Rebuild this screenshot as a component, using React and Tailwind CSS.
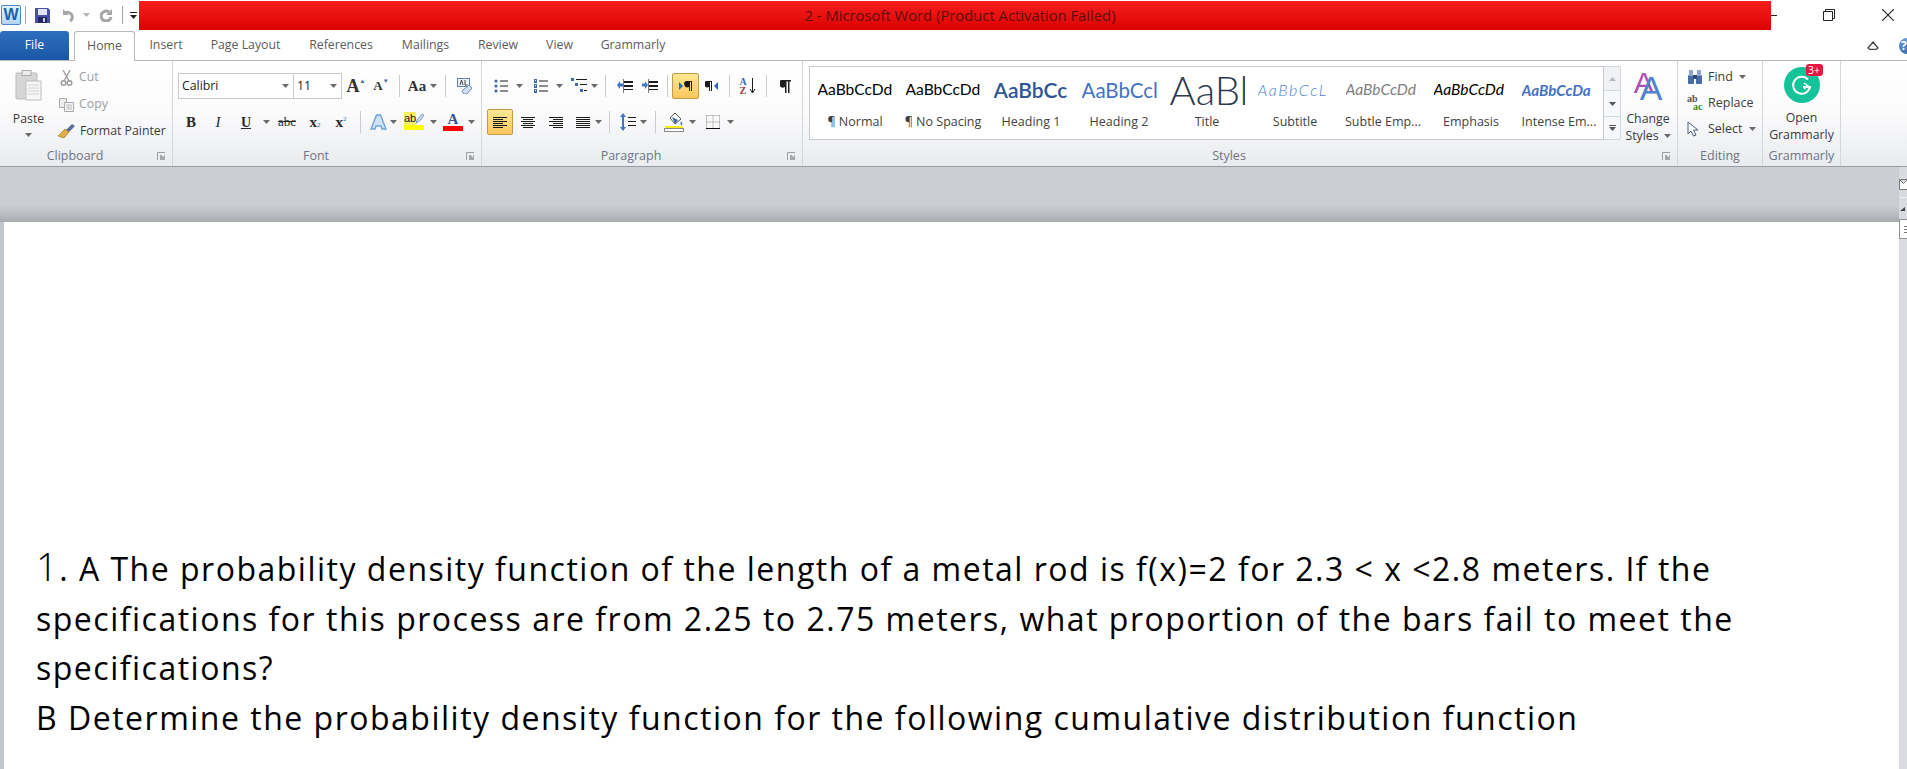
import React from "react";

const UI = "font-['Open_Sans','Noto_Sans',sans-serif]";

function Caret({ c = "#6a6a6a" }) {
  return (
    <svg width="7" height="4" viewBox="0 0 7 4" className="shrink-0">
      <path d="M0 0h7L3.5 4z" fill={c} />
    </svg>
  );
}

function Sep() {
  return <div className="w-px h-[22px] bg-[#c9ccd1]" />;
}

function Cell({ w, children }) {
  return <div className={`${w} h-[26px] shrink-0 flex items-center justify-center`}>{children}</div>;
}

function Launcher() {
  return (
    <svg width="9" height="9" viewBox="0 0 9 9">
      <path d="M0.5 8V0.5H8" fill="none" stroke="#9a9da3" />
      <path d="M3 3h2v1h1v1h1V3h1v5H3z" fill="#a4a7ac" />
    </svg>
  );
}

function Group({ w, label, launcher, children }) {
  return (
    <div className={`${w} shrink-0 h-[105px] flex flex-col border-r border-[#d3d6db]`}>
      <div className="h-[85px] relative">{children}</div>
      <div className="h-[20px] flex items-center">
        <div className={`flex-1 text-center text-[12.5px] text-[#6c7589] ${UI}`}>{label}</div>
        {launcher && (
          <div className="w-[22px] flex justify-center">
            <Launcher />
          </div>
        )}
      </div>
    </div>
  );
}

function Lines({ rows, w = 14 }) {
  return (
    <svg width={w} height="14" viewBox={`0 0 ${w} 14`}>
      {rows.map((r, i) => (
        <rect key={i} x={r[0]} y={r[1]} width={r[2]} height="1" fill="#1c1c1c" />
      ))}
    </svg>
  );
}

const alignLeft = [[0, 2, 14], [0, 4, 10], [0, 6, 14], [0, 8, 10], [0, 10, 14], [0, 12, 10]];
const alignCenter = [[0, 2, 14], [2, 4, 10], [0, 6, 14], [2, 8, 10], [0, 10, 14], [2, 12, 10]];
const alignRight = [[0, 2, 14], [4, 4, 10], [0, 6, 14], [4, 8, 10], [0, 10, 14], [4, 12, 10]];
const justify = [[0, 2, 14], [0, 4, 14], [0, 6, 14], [0, 8, 14], [0, 10, 14], [0, 12, 14]];

function Bullets() {
  return (
    <svg width="14" height="14" viewBox="0 0 14 14">
      {[2, 7, 12].map((y) => (
        <g key={y}>
          <circle cx="2" cy={y} r="1.6" fill="#3f68ad" />
          <rect x="6" y={y - 0.5} width="8" height="1" fill="#1c1c1c" />
        </g>
      ))}
    </svg>
  );
}

function Numbering() {
  return (
    <svg width="15" height="14" viewBox="0 0 15 14">
      {[2, 7, 12].map((y) => (
        <g key={y}>
          <rect x="1" y={y - 2} width="3" height="4" fill="#3f68ad" />
          <rect x="2" y={y - 1} width="1" height="1" fill="#fff" />
          <rect x="6" y={y - 0.5} width="9" height="1" fill="#1c1c1c" />
        </g>
      ))}
    </svg>
  );
}

function Multilevel() {
  return (
    <svg width="16" height="16" viewBox="0 0 16 16">
      <rect x="0" y="0" width="3" height="3" fill="#3f68ad" />
      <rect x="5" y="1" width="11" height="1" fill="#1c1c1c" />
      <rect x="4" y="5" width="3" height="3" fill="#3f68ad" />
      <rect x="9" y="6" width="7" height="1" fill="#1c1c1c" />
      <rect x="9" y="11" width="3" height="3" fill="#3f68ad" />
      <rect x="13" y="12" width="3" height="1" fill="#1c1c1c" />
    </svg>
  );
}

function Indent({ flip }) {
  return (
    <svg width="16" height="14" viewBox="0 0 16 14">
      <rect x="7" y="2" width="9" height="2" fill="#1c1c1c" />
      <rect x="7" y="6" width="9" height="2" fill="#1c1c1c" />
      <rect x="7" y="10" width="9" height="1" fill="#1c1c1c" />
      <rect x="6" y="0" width="1" height="14" fill="#777" />
      {flip ? (
        <path d="M0 4.5h3V2l3 4-3 4V7.5H0z" fill="#3c76c9" />
      ) : (
        <path d="M6 4.5H3V2L0 6l3 4V7.5h3z" fill="#3c76c9" />
      )}
    </svg>
  );
}

function Para({ dir }) {
  return (
    <svg width="14" height="12" viewBox="0 0 14 12">
      {dir === "ltr" ? (
        <>
          <path d="M0 2l4 4-4 4z" fill="#2c66bd" />
          <path d="M7 1h6v10h-1V2h-1v9h-1V7a3 3 0 0 1 -3-6z" fill="#1c1c1c" />
        </>
      ) : (
        <>
          <path d="M1 1h6v10H6V2H5v9H4V7a3 3 0 0 1 -3-6z" fill="#1c1c1c" />
          <path d="M13 2L9 6l4 4z" fill="#2c66bd" />
        </>
      )}
    </svg>
  );
}

function Pilcrow() {
  return (
    <svg width="11" height="14" viewBox="0 0 11 14">
      <path d="M1 1h10v1.5H9.5V14H8V2.5H6.5V14H5V8A3.5 3.5 0 0 1 1 1z" fill="#1f1f1f" />
    </svg>
  );
}

function Sort() {
  return (
    <div className="flex items-center gap-[2px]">
      <div className="flex flex-col text-[10px] leading-[9px] font-bold font-['Liberation_Serif',serif]">
        <span className="text-[#3f68ad]">A</span>
        <span className="text-[#a33a3a]">Z</span>
      </div>
      <svg width="7" height="16" viewBox="0 0 7 16">
        <path d="M3.5 0v14M1 11l2.5 4L6 11" fill="none" stroke="#1c1c1c" />
      </svg>
    </div>
  );
}

function LineSpacing() {
  return (
    <svg width="16" height="18" viewBox="0 0 16 18">
      <path d="M3 0l3 4H4v10h2l-3 4-3-4h2V4H0z" fill="#3c76c9" />
      <rect x="8" y="4" width="8" height="1" fill="#1c1c1c" />
      <rect x="8" y="8" width="8" height="1" fill="#1c1c1c" />
      <rect x="8" y="12" width="8" height="1" fill="#1c1c1c" />
    </svg>
  );
}

function Shading() {
  return (
    <svg width="20" height="20" viewBox="0 0 20 20">
      <path d="M6 6l5-5 6 6-6 5z" fill="#fff" stroke="#555" />
      <path d="M8 5l6 3-3 4z" fill="#3f68ad" />
      <path d="M17 9c1 2 2 3 1 4s-2-1-1-4z" fill="#3f68ad" />
      <rect x="1" y="14" width="18" height="2" fill="#f5ef1e" />
      <rect x="0.5" y="16.5" width="19" height="3" fill="#fff" stroke="#8a8a8a" />
    </svg>
  );
}

function Borders() {
  return (
    <svg width="14" height="14" viewBox="0 0 14 14">
      <path d="M0.5 0.5h13M0.5 0.5v13M13.5 0.5v13M0.5 7h13M7 0.5v13" stroke="#8a8a8a" strokeDasharray="1 1" fill="none" />
      <rect x="0" y="13" width="14" height="1" fill="#111" />
    </svg>
  );
}

function Style({ label, className, text }) {
  return (
    <div className="w-[88px] h-[72px] shrink-0 flex flex-col items-center font-['Lato',sans-serif]">
      <div className="h-[46px] w-[75px] overflow-hidden flex items-center whitespace-nowrap">
        <span className={className}>{text}</span>
      </div>
      <div className={`h-[16px] mt-[1px] text-[12.5px] leading-[16px] text-[#3f3f3f] whitespace-nowrap ${UI}`}>{label}</div>
    </div>
  );
}

function EditRow({ icon, label, caret }) {
  return (
    <div className="flex items-center h-[26px]">
      <div className="w-[21px] ml-[9px] flex justify-start">{icon}</div>
      <span className={`text-[12.5px] text-[#3c3c3c] ${UI}`}>{label}</span>
      {caret && (
        <span className="ml-[6px]">
          <Caret />
        </span>
      )}
    </div>
  );
}

export default function App() {
  return (
    <div className={`w-[1907px] h-[769px] overflow-hidden bg-white flex flex-col ${UI}`}>
      {/* Title bar */}
      <div className="h-[30px] flex bg-white shrink-0">
        <div className="w-[139px] shrink-0 flex items-center">
          <div className="ml-[1px] w-[20px] h-[20px] border border-[#4a86c8] rounded-[2px] bg-gradient-to-b from-[#e6f1fb] to-[#b8d4ee] flex items-center justify-center text-[16px] font-bold leading-none text-[#1b62ad] font-['Liberation_Sans',sans-serif]">
            W
          </div>
          <div className="ml-[4px] w-px h-[18px] bg-[#a8a8a8]" />
          <div className="ml-[9px]">
            <svg width="15" height="15" viewBox="0 0 15 15">
              <path d="M0 0h13l2 2v13H0z" fill="#4a4fa8" />
              <rect x="3" y="1" width="9" height="6" fill="#dfe3f5" />
              <rect x="3" y="9" width="9" height="6" fill="#23265e" />
              <rect x="8" y="10" width="2" height="4" fill="#c9ccdb" />
            </svg>
          </div>
          <div className="ml-[12px]">
            <svg width="13" height="14" viewBox="0 0 13 14">
              <path d="M1 1l0 6h6z" fill="#a6a6a6" />
              <path d="M3 5a4.5 4.5 0 1 1 5 8" fill="none" stroke="#a6a6a6" strokeWidth="3" />
            </svg>
          </div>
          <div className="ml-[8px]">
            <Caret c="#b4b4b4" />
          </div>
          <div className="ml-[10px]">
            <svg width="13" height="14" viewBox="0 0 13 14">
              <path d="M12 1v6H6z" fill="#a6a6a6" />
              <path d="M9 4a5 5 0 1 0 2 5" fill="none" stroke="#a6a6a6" strokeWidth="3" />
            </svg>
          </div>
          <div className="ml-[9px] w-px h-[18px] bg-[#a8a8a8]" />
          <div className="ml-[7px]">
            <svg width="7" height="7" viewBox="0 0 7 7">
              <rect width="7" height="1" fill="#222" />
              <path d="M0 3h7L3.5 7z" fill="#222" />
            </svg>
          </div>
        </div>
        <div className="w-[1632px] h-[29px] mt-[1px] shrink-0 bg-gradient-to-b from-[#f61c1c] to-[#dc0000] flex items-center justify-center text-[14.8px] text-[#5e0c0c] pb-[1px] pl-[10px]">
          2 - Microsoft Word (Product Activation Failed)
        </div>
        <div className="flex-1 flex items-center">
          <div className="w-[6px] h-px bg-[#222]" />
          <div className="ml-[46px]">
            <svg width="12" height="12" viewBox="0 0 12 12">
              <path d="M0.5 2.5h9v9h-9zM2.5 2.5v-2h9v9h-2" fill="none" stroke="#222" />
            </svg>
          </div>
          <div className="ml-[47px]">
            <svg width="12" height="12" viewBox="0 0 12 12">
              <path d="M0 0l12 12M12 0L0 12" stroke="#222" strokeWidth="1.1" />
            </svg>
          </div>
        </div>
      </div>

      {/* Tabs */}
      <div className="h-[31px] shrink-0 flex items-end border-b border-[#b6b9be] bg-white text-[12.3px] text-[#5c5c5c]">
        <div className="w-[69px] h-[29px] rounded-t-[3px] bg-gradient-to-b from-[#2f6fc0] to-[#1a57a6] text-white flex items-center justify-center">File</div>
        <div className="ml-[5px] w-[61px] h-[30px] -mb-px rounded-t-[3px] border border-b-0 border-[#b6b9be] bg-white flex items-center justify-center">Home</div>
        <div className="w-[62px] h-[29px] flex items-center justify-center">Insert</div>
        <div className="w-[97px] h-[29px] flex items-center justify-center">Page Layout</div>
        <div className="w-[94px] h-[29px] flex items-center justify-center">References</div>
        <div className="w-[75px] h-[29px] flex items-center justify-center">Mailings</div>
        <div className="w-[70px] h-[29px] flex items-center justify-center">Review</div>
        <div className="w-[53px] h-[29px] flex items-center justify-center">View</div>
        <div className="w-[94px] h-[29px] flex items-center justify-center">Grammarly</div>
        <div className="flex-1 h-[29px] flex items-center justify-end">
          <svg width="12" height="9" viewBox="0 0 12 9" className="mr-[20px]">
            <path d="M1 7l5-6 5 6-2 1.5H3z" fill="none" stroke="#444" strokeWidth="1.3" />
          </svg>
          <div className="w-[8px] h-[16px] overflow-hidden rounded-l-full bg-gradient-to-b from-[#6b9ad8] to-[#3b6fb8] text-white text-[12px] font-bold leading-[16px] pl-[2px]">?</div>
        </div>
      </div>

      {/* Ribbon */}
      <div className="h-[106px] shrink-0 flex border-b border-[#989ca3] bg-gradient-to-b from-white via-[#fbfbfc] to-[#e9ebee]">
        <Group w="w-[173px]" label="Clipboard" launcher>
          <div className="flex h-full">
            <div className="w-[57px] flex flex-col items-center pt-[9px]">
              <svg width="27" height="31" viewBox="0 0 27 31">
                <rect x="1" y="3" width="21" height="26" rx="1" fill="#d6d6d6" stroke="#bbb" />
                <rect x="7" y="0.5" width="9" height="5" fill="#eee" stroke="#aaa" />
                <path d="M11 11h15v19H11z" fill="#f7f7f7" stroke="#bdbdbd" />
                <path d="M13 15h11M13 18h11M13 21h11M13 24h11" stroke="#d2d2d2" />
              </svg>
              <span className="text-[12.3px] leading-[16px] mt-[10px] text-[#3c3c3c]">Paste</span>
              <span className="mt-[6px]">
                <Caret />
              </span>
            </div>
            <div className="flex flex-col pt-[3px]">
              <div className="h-[27px] flex items-center text-[12.3px] text-[#a0a0a0]">
                <svg width="15" height="16" viewBox="0 0 15 16" className="ml-[3px] mr-[4px]">
                  <path d="M3 0l6 11M10 0L4 11" stroke="#a0a0a0" strokeWidth="1.4" />
                  <circle cx="3.5" cy="13" r="2.3" fill="none" stroke="#9a9a9a" strokeWidth="1.4" />
                  <circle cx="9.5" cy="13" r="2.3" fill="none" stroke="#9a9a9a" strokeWidth="1.4" />
                </svg>
                Cut
              </div>
              <div className="h-[27px] flex items-center text-[12.3px] text-[#a0a0a0]">
                <svg width="15" height="14" viewBox="0 0 15 14" className="ml-[2px] mr-[5px]">
                  <path d="M0.5 0.5h7v9h-7z" fill="#eee" stroke="#aaa" />
                  <path d="M5.5 4.5h9v9h-9z" fill="#f6f6f6" stroke="#aaa" />
                  <path d="M7 7h6M7 9h6M7 11h6" stroke="#bbb" />
                </svg>
                Copy
              </div>
              <div className="h-[27px] flex items-center text-[12.3px] text-[#3c3c3c]">
                <svg width="17" height="15" viewBox="0 0 17 15" className="ml-[1px] mr-[5px]">
                  <path d="M0 12l7-7 4 3-5 6z" fill="#e0b341" stroke="#9c7a26" strokeWidth="0.7" />
                  <path d="M8 6l6-6 3 2-6 6z" fill="#5a6f9a" />
                </svg>
                Format Painter
              </div>
            </div>
          </div>
        </Group>

        <Group w="w-[309px]" label="Font" launcher>
          <div className="pt-[12px] pl-[5px] flex">
            <div className="w-[116px] h-[26px] border border-[#c6c9ce] bg-white flex items-center justify-between pl-[3px] pr-[4px] text-[12.3px] text-[#222] shrink-0">
              Calibri
              <Caret />
            </div>
            <div className="w-[48px] h-[26px] border border-l-0 border-[#c6c9ce] bg-white flex items-center justify-between pl-[3px] pr-[4px] text-[12.3px] text-[#222] shrink-0">
              11
              <Caret />
            </div>
            <Cell w="w-[28px]">
              <span className="text-[18px] font-bold text-[#333] font-['Liberation_Serif',serif]">A</span>
              <span className="text-[6px] text-[#3f68ad] -mt-[10px]">▲</span>
            </Cell>
            <Cell w="w-[22px]">
              <span className="text-[13px] font-bold text-[#333] font-['Liberation_Serif',serif]">A</span>
              <span className="text-[6px] text-[#3f68ad] -mt-[10px]">▼</span>
            </Cell>
            <Cell w="w-[14px]">
              <Sep />
            </Cell>
            <Cell w="w-[22px]">
              <span className="text-[15px] font-bold text-[#333] font-['Liberation_Serif',serif]">Aa</span>
            </Cell>
            <Cell w="w-[10px]">
              <Caret />
            </Cell>
            <Cell w="w-[14px]">
              <Sep />
            </Cell>
            <Cell w="w-[25px]">
              <svg width="16" height="16" viewBox="0 0 16 16">
                <rect x="0.5" y="0.5" width="12" height="8" fill="#eef2f8" stroke="#5f7fae" />
                <path d="M3 7l1.5-5L6 7M8 2v5h2.5" fill="none" stroke="#333" strokeWidth="0.9" />
                <path d="M5 13l7-6 3 3-5 6H7z" fill="#cfe0f5" stroke="#6c8bb8" />
              </svg>
            </Cell>
          </div>
          <div className="mt-[10px] pl-[6px] flex text-[#2a2a2a] font-['Liberation_Serif',serif]">
            <Cell w="w-[24px]">
              <span className="text-[15px] font-bold">B</span>
            </Cell>
            <Cell w="w-[30px]">
              <span className="text-[15px] italic">I</span>
            </Cell>
            <Cell w="w-[26px]">
              <span className="text-[14px] font-bold underline">U</span>
            </Cell>
            <Cell w="w-[14px]">
              <Caret />
            </Cell>
            <Cell w="w-[28px]">
              <span className="text-[13px] line-through">abc</span>
            </Cell>
            <Cell w="w-[28px]">
              <span className="text-[15px] font-bold">x</span>
              <span className="text-[7px] text-[#3f68ad] mt-[6px]">2</span>
            </Cell>
            <Cell w="w-[24px]">
              <span className="text-[15px] font-bold">x</span>
              <span className="text-[7px] text-[#3f68ad] -mt-[6px]">2</span>
            </Cell>
            <Cell w="w-[15px]">
              <Sep />
            </Cell>
            <Cell w="w-[20px]">
              <svg width="17" height="16" viewBox="0 0 17 16">
                <path d="M6.5 1h4L16 15h-4l-1-3H6l-1 3H1z" fill="#cfe2f8" stroke="#6ea3de" strokeWidth="1.4" />
              </svg>
            </Cell>
            <Cell w="w-[10px]">
              <Caret />
            </Cell>
            <Cell w="w-[32px]">
              <div className="flex flex-col items-center w-[20px] -mt-[2px]">
                <div className="flex items-center">
                  <span className="text-[11px] leading-[13px] bg-[#f3ef6a] font-['Liberation_Sans',sans-serif] text-[#222]">ab</span>
                  <svg width="8" height="11" viewBox="0 0 8 11">
                    <path d="M0 10l1-3 5-6 2 1.5-5 6z" fill="#cfe0f5" stroke="#5f7fae" strokeWidth="0.8" />
                  </svg>
                </div>
                <div className="w-[20px] h-[5px] bg-[#ffff00]" />
              </div>
            </Cell>
            <Cell w="w-[6px]">
              <Caret />
            </Cell>
            <Cell w="w-[34px]">
              <div className="flex flex-col items-center w-[20px] -mt-[2px]">
                <span className="text-[15px] leading-[14px] font-bold text-[#2f5597]">A</span>
                <div className="w-[20px] h-[5px] bg-[#ff0000]" />
              </div>
            </Cell>
            <Cell w="w-[2px]">
              <Caret />
            </Cell>
          </div>
        </Group>

        <Group w="w-[321px]" label="Paragraph" launcher>
          <div className="pt-[12px] pl-[9px] flex">
            <Cell w="w-[19px]">
              <Bullets />
            </Cell>
            <Cell w="w-[19px]">
              <Caret />
            </Cell>
            <Cell w="w-[22px]">
              <Numbering />
            </Cell>
            <Cell w="w-[16px]">
              <Caret />
            </Cell>
            <Cell w="w-[24px]">
              <Multilevel />
            </Cell>
            <Cell w="w-[6px]">
              <Caret />
            </Cell>
            <Cell w="w-[16px]">
              <Sep />
            </Cell>
            <Cell w="w-[23px]">
              <Indent />
            </Cell>
            <Cell w="w-[28px]">
              <Indent flip />
            </Cell>
            <Cell w="w-[6px]">
              <Sep />
            </Cell>
            <div className="ml-[2px] w-[27px] h-[26px] shrink-0 rounded-[2px] border border-[#c29a4a] bg-gradient-to-b from-[#fde893] to-[#fcc75c] flex items-center justify-center">
              <Para dir="ltr" />
            </div>
            <Cell w="w-[26px]">
              <Para dir="rtl" />
            </Cell>
            <Cell w="w-[8px]">
              <Sep />
            </Cell>
            <Cell w="w-[29px]">
              <Sort />
            </Cell>
            <Cell w="w-[8px]">
              <Sep />
            </Cell>
            <Cell w="w-[30px]">
              <Pilcrow />
            </Cell>
          </div>
          <div className="mt-[10px] pl-[5px] flex">
            <div className="w-[26px] h-[26px] shrink-0 rounded-[2px] border border-[#c29a4a] bg-gradient-to-b from-[#fde893] to-[#fcc75c] flex items-center justify-center">
              <Lines rows={alignLeft} />
            </div>
            <Cell w="w-[30px]">
              <Lines rows={alignCenter} />
            </Cell>
            <Cell w="w-[26px]">
              <Lines rows={alignRight} />
            </Cell>
            <Cell w="w-[28px]">
              <Lines rows={justify} />
            </Cell>
            <Cell w="w-[2px]">
              <Caret />
            </Cell>
            <Cell w="w-[20px]">
              <Sep />
            </Cell>
            <Cell w="w-[18px]">
              <LineSpacing />
            </Cell>
            <Cell w="w-[12px]">
              <Caret />
            </Cell>
            <Cell w="w-[12px]">
              <Sep />
            </Cell>
            <Cell w="w-[26px]">
              <Shading />
            </Cell>
            <Cell w="w-[10px]">
              <Caret />
            </Cell>
            <Cell w="w-[32px]">
              <Borders />
            </Cell>
            <Cell w="w-[2px]">
              <Caret />
            </Cell>
          </div>
        </Group>

        <Group w="w-[875px]" label="Styles" launcher>
          <div className="pt-[5px] pl-[6px] flex">
            <div className="w-[795px] h-[74px] shrink-0 border border-[#c6c9ce] bg-white flex pl-px overflow-hidden">
              <Style label="¶ Normal" text="AaBbCcDd" className="text-[15.6px] text-black" />
              <Style label="¶ No Spacing" text="AaBbCcDd" className="text-[15.6px] text-black" />
              <Style label="Heading 1" text="AaBbCc" className="text-[21px] font-semibold text-[#2f5597]" />
              <Style label="Heading 2" text="AaBbCcl" className="text-[20.5px] text-[#4472c4]" />
              <Style label="Title" text="AaBl" className="text-[40px] font-light text-[#2e3a4f]" />
              <Style label="Subtitle" text="AaBbCcL" className="text-[16px] italic tracking-[1.6px] font-light text-[#4f81d0]" />
              <Style label="Subtle Emp..." text="AaBbCcDd" className="text-[15.6px] italic text-[#808080]" />
              <Style label="Emphasis" text="AaBbCcDd" className="text-[15.6px] italic text-black" />
              <Style label="Intense Em..." text="AaBbCcDa" className="text-[15.2px] italic font-bold text-[#4472c4]" />
            </div>
            <div className="w-[17px] h-[74px] shrink-0 flex flex-col">
              <div className="h-[25px] border border-l-0 border-[#d3d6db] rounded-tr-[2px] bg-[#f1f2f4] flex items-center justify-center">
                <svg width="7" height="4" viewBox="0 0 7 4">
                  <path d="M0 4h7L3.5 0z" fill="#b8b8b8" />
                </svg>
              </div>
              <div className="h-[25px] border border-y-0 border-l-0 border-[#d3d6db] bg-[#f7f8f9] flex items-center justify-center">
                <Caret c="#555" />
              </div>
              <div className="h-[24px] border border-l-0 border-[#d3d6db] rounded-br-[2px] bg-[#f7f8f9] flex flex-col items-center justify-center gap-[1px]">
                <div className="w-[7px] h-px bg-[#555]" />
                <Caret c="#555" />
              </div>
            </div>
            <div className="w-[54px] shrink-0 flex flex-col items-center">
              <div className="h-[40px] flex items-center text-[40px] leading-none font-['Liberation_Sans',sans-serif]">
                <span className="text-[#ab4fb4] text-[30px] -mt-[6px]">A</span>
                <span className="text-[#4f83ca] text-[34px] -ml-[14px] mt-[4px]">A</span>
              </div>
              <span className="text-[12.3px] leading-[17px] mt-[4px] text-[#3c3c3c]">Change</span>
              <span className="flex items-center gap-[5px] text-[12.3px] leading-[17px] text-[#3c3c3c]">
                Styles
                <Caret />
              </span>
            </div>
          </div>
        </Group>

        <Group w="w-[85px]" label="Editing">
          <div className="pt-[3px] flex flex-col">
            <EditRow
              label="Find"
              caret
              icon={
                <svg width="16" height="14" viewBox="0 0 16 14">
                  <rect x="1" y="5" width="6" height="9" rx="1" fill="#4a6aa5" />
                  <rect x="9" y="5" width="6" height="9" rx="1" fill="#4a6aa5" />
                  <rect x="2" y="0" width="4" height="6" fill="#8fa7d0" />
                  <rect x="10" y="0" width="4" height="6" fill="#8fa7d0" />
                  <rect x="6" y="5" width="4" height="4" fill="#2e4a7d" />
                </svg>
              }
            />
            <EditRow
              label="Replace"
              icon={
                <div className="flex flex-col leading-[8px] text-[10px] font-bold font-['Liberation_Serif',serif]">
                  <span className="text-[#555]">ab</span>
                  <span className="text-[#2e8b2e] ml-[6px]">ac</span>
                </div>
              }
            />
            <EditRow
              label="Select"
              caret
              icon={
                <svg width="12" height="16" viewBox="0 0 12 16">
                  <path d="M1 1v12l3-3 2.5 5 2.5-1-2.5-5H11z" fill="#fff" stroke="#4a5f85" />
                </svg>
              }
            />
          </div>
        </Group>

        <Group w="w-[78px]" label="Grammarly">
          <div className="pt-[6px] flex flex-col items-center">
            <div className="relative w-[36px] h-[36px] rounded-full bg-[#15c39a] flex items-center justify-center">
              <svg width="22" height="22" viewBox="0 0 22 22">
                <path d="M17 5.5A8.5 8.5 0 1 0 19 13h-7" fill="none" stroke="#fff" strokeWidth="2" />
                <path d="M13 15l4-3-4-3" fill="none" stroke="#fff" strokeWidth="1.5" />
              </svg>
              <div className="absolute -top-[3px] -right-[3px] w-[17px] h-[12px] rounded-[3px] bg-[#e8173f] text-white text-[10.5px] leading-[12px] text-center">3+</div>
            </div>
            <span className="text-[12.3px] leading-[17px] mt-[6px] text-[#3c3c3c]">Open</span>
            <span className="text-[12.3px] leading-[17px] text-[#3c3c3c]">Grammarly</span>
          </div>
        </Group>
      </div>

      {/* Document area */}
      <div className="flex-1 flex min-h-0">
        <div className="flex-1 flex flex-col min-w-0">
          <div className="h-[55px] shrink-0 bg-gradient-to-b from-[#cbced2] via-[#cbced2] via-[70%] to-[#a9acb1]" />
          <div className="flex-1 min-h-0 bg-[#c3c6cc] pl-[4px]">
            <div className="h-full bg-white pl-[32px] pt-[320px] text-[32px] leading-[49.5px] tracking-[1.5px] text-black font-['Open_Sans',sans-serif] whitespace-nowrap">
              <div>
                <span className="text-[38px] font-light">1</span>. A The probability density function of the length of a metal rod is f(x)=2 for 2.3 &lt; x &lt;2.8 meters. If the
              </div>
              <div>specifications for this process are from 2.25 to 2.75 meters, what proportion of the bars fail to meet the</div>
              <div>specifications?</div>
              <div>B Determine the probability density function for the following cumulative distribution function</div>
            </div>
          </div>
        </div>
        <div className="w-[8px] shrink-0 bg-[#d9dbe0] flex flex-col pt-[4px]">
          <div className="h-[27px] flex items-center border-b border-[#eef0f2]">
            <svg width="8" height="12" viewBox="0 0 8 12">
              <path d="M0.5 1.5h8v10h-8zM0.5 1.5l4 4 4-4" fill="#fff" stroke="#777" />
            </svg>
          </div>
          <div className="h-[21px] flex items-center">
            <svg width="5" height="4" viewBox="0 0 5 4" className="ml-[1px]">
              <path d="M0 4l5-4v4z" fill="#444" />
            </svg>
          </div>
          <div className="h-[20px] bg-white border border-r-0 border-[#8f9297] flex flex-col items-start justify-center gap-[2px] pl-[4px]">
            <div className="w-[4px] h-px bg-[#777]" />
            <div className="w-[4px] h-px bg-[#777]" />
            <div className="w-[4px] h-px bg-[#777]" />
          </div>
        </div>
      </div>
    </div>
  );
}
